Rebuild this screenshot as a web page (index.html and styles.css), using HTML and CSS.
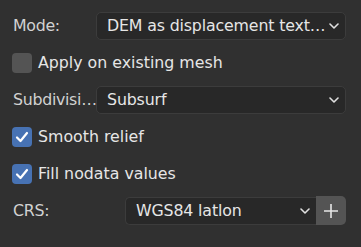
FILE: index.html
```html
<!DOCTYPE html>
<html>
<head>
<meta charset="utf-8">
<link rel="stylesheet" href="styles.css">
</head>
<body>
<div class="panel">
  <div class="row">
    <div class="label">Mode:</div>
    <div class="select">
      <span class="value">DEM as displacement text…</span>
      <svg class="chev" width="10" height="6" viewBox="0 0 10 6"><path d="M1 1 L5 5 L9 1" fill="none" stroke="#e0e0e0" stroke-width="1.6" stroke-linecap="round" stroke-linejoin="round"/></svg>
    </div>
  </div>
  <div class="row">
    <div class="check"><span class="box"></span><span class="ctext">Apply on existing mesh</span></div>
  </div>
  <div class="row">
    <div class="label">Subdivisi…</div>
    <div class="select">
      <span class="value">Subsurf</span>
      <svg class="chev" width="10" height="6" viewBox="0 0 10 6"><path d="M1 1 L5 5 L9 1" fill="none" stroke="#e0e0e0" stroke-width="1.6" stroke-linecap="round" stroke-linejoin="round"/></svg>
    </div>
  </div>
  <div class="row">
    <div class="check"><span class="box on"><svg width="14" height="12" viewBox="0 0 14 12"><path d="M2 6.5 L5.5 10 L12 2" fill="none" stroke="#fff" stroke-width="2.2" stroke-linecap="round" stroke-linejoin="round"/></svg></span><span class="ctext">Smooth relief</span></div>
  </div>
  <div class="row">
    <div class="check"><span class="box on"><svg width="14" height="12" viewBox="0 0 14 12"><path d="M2 6.5 L5.5 10 L12 2" fill="none" stroke="#fff" stroke-width="2.2" stroke-linecap="round" stroke-linejoin="round"/></svg></span><span class="ctext">Fill nodata values</span></div>
  </div>
  <div class="row">
    <div class="label crs">CRS:</div>
    <div class="select joined">
      <span class="value">WGS84 latlon</span>
      <svg class="chev" width="10" height="6" viewBox="0 0 10 6"><path d="M1 1 L5 5 L9 1" fill="none" stroke="#e0e0e0" stroke-width="1.6" stroke-linecap="round" stroke-linejoin="round"/></svg>
    </div>
    <div class="plus"><svg width="16" height="16" viewBox="0 0 16 16"><path d="M8 1 V15 M1 8 H15" stroke="#e6e6e6" stroke-width="1.6"/></svg></div>
  </div>
</div>
</body>
</html>
```
FILE: styles.css
```css
html, body {
  margin: 0;
  padding: 0;
  background: #303030;
}
body {
  width: 361px;
  height: 247px;
  overflow: hidden;
  font-family: "DejaVu Sans", sans-serif;
  font-size: 15.8px;
  color: #e6e6e6;
}
.panel {
  padding: 7px 15px 0 12px;
}
.row {
  height: 37px;
  display: flex;
  align-items: center;
}
.label {
  width: 84px;
  padding-left: 1px;
  box-sizing: border-box;
  color: #d2d2d2;
  white-space: nowrap;
  overflow: hidden;
  letter-spacing: -0.3px;
}
.label.crs {
  width: 113px;
}
.select {
  flex: 1;
  min-width: 0;
  height: 28px;
  box-sizing: border-box;
  background: #282828;
  border: 1px solid #3c3c3c;
  border-radius: 5px;
  display: flex;
  align-items: center;
  padding: 0 6px 0 10px;
}
.select.joined {
  border-radius: 5px 0 0 5px;
  border-right: none;
}
.value {
  flex: 1;
  white-space: nowrap;
  letter-spacing: -0.15px;
}
.chev {
  margin-left: 4px;
  flex: none;
}
.plus {
  width: 30px;
  height: 29px;
  background: #545454;
  border-radius: 0 5px 5px 0;
  display: flex;
  align-items: center;
  justify-content: center;
}
.check {
  display: flex;
  align-items: center;
  gap: 6px;
}
.box {
  width: 20px;
  height: 20px;
  border-radius: 4px;
  background: #545454;
  display: flex;
  align-items: center;
  justify-content: center;
}
.box.on {
  background: #4772b3;
}
.ctext {
  white-space: nowrap;
}
```
